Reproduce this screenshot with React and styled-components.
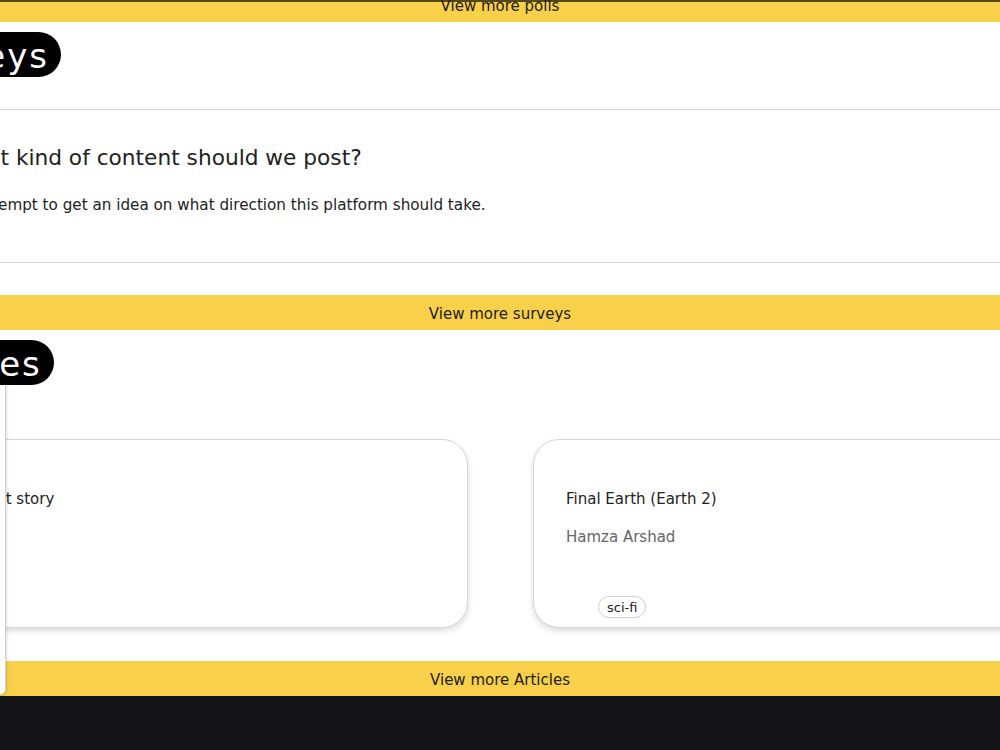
import React from "react";
import styled, { createGlobalStyle } from "styled-components";

const GlobalStyle = createGlobalStyle`
  html, body {
    margin: 0;
    padding: 0;
    background: #131418;
    overflow: hidden;
  }
  body {
    font-family: "DejaVu Sans", Verdana, sans-serif;
    color: #222;
  }
`;

const Page = styled.div`
  width: 1000px;
  height: 750px;
  overflow: hidden;
  background: #131418;
  position: relative;
`;

const Main = styled.main`
  background: #fff;
  margin-top: -13px;
  display: flex;
  flex-direction: column;
`;

const TopShade = styled.div`
  position: absolute;
  top: 0;
  left: 0;
  right: 0;
  height: 2px;
  background: rgba(40, 32, 8, 0.78);
  z-index: 3;
`;

const MoreBar = styled.a`
  display: block;
  height: 35px;
  line-height: 38px;
  background: #f9d049;
  color: #222;
  font-size: 15px;
  text-align: center;
  text-decoration: none;
  margin-top: ${(p) => p.$gap || 0}px;
`;

const Section = styled.section`
  display: flex;
  flex-direction: column;
  padding-top: 10px;
`;

const Content = styled.div`
  margin-left: -48px;
  display: flex;
  flex-direction: column;
`;

const Pill = styled.h2`
  align-self: flex-start;
  margin: 0 0 0 -65px;
  height: 45px;
  box-sizing: border-box;
  line-height: 45px;
  padding: 2px 12px 0 12px;
  background: #000;
  color: #fff;
  font-size: 34px;
  font-weight: normal;
  letter-spacing: 2px;
  border-radius: 23px;
  position: relative;
  z-index: 2;
`;

const Rule = styled.hr`
  border: 0;
  border-top: 1px solid #d2d2d2;
  margin: ${(p) => p.$top || 0}px 0 0 -50px;
  width: 1100px;
`;

const SurveyItem = styled.article`
  padding: 35px 0 47px;
  display: flex;
  flex-direction: column;
  gap: 24px;
`;

const SurveyTitle = styled.h3`
  margin: 0;
  font-size: 21.7px;
  line-height: 26px;
  font-weight: normal;
  color: #222;
`;

const SurveyText = styled.p`
  margin: 0;
  font-size: 15.2px;
  line-height: 20px;
  color: #222;
`;

const CardGrid = styled.div`
  display: grid;
  grid-template-columns: 543px 543px;
  gap: 65px;
  margin: 54px 0 0 -27px;
`;

const Card = styled.div`
  height: 189px;
  box-sizing: border-box;
  padding: 49px 33px 9px 32px;
  border: 1px solid #d6d6d6;
  border-radius: 26px;
  background: #fff;
  box-shadow: 0 3px 6px rgba(0, 0, 0, 0.14);
  display: flex;
  flex-direction: column;
`;

const CardTitle = styled.h4`
  margin: 0;
  font-size: 15px;
  line-height: 20px;
  font-weight: normal;
  color: #222;
`;

const Author = styled.p`
  margin: 18px 0 0;
  font-size: 15px;
  line-height: 20px;
  color: #666;
`;

const Tags = styled.ul`
  list-style: none;
  margin: auto 0 0;
  padding: 0 0 0 32px;
  display: flex;
  gap: 6px;
`;

const Tag = styled.li`
  font-size: 13px;
  line-height: 19px;
  padding: 1px 8px 0;
  border: 1px solid #cfcfcf;
  border-radius: 11px;
  color: #222;
`;

const Drawer = styled.aside`
  position: absolute;
  top: 384px;
  left: -300px;
  width: 304px;
  height: 309px;
  background: #fff;
  border: 1px solid #cfcfcf;
  border-radius: 0 0 6px 0;
  box-shadow: 1px 1px 3px rgba(0, 0, 0, 0.12);
  z-index: 1;
`;

const Footer = styled.footer`
  height: 120px;
  background: #131418;
`;

const articles = [
  { title: "A short story", author: "", tags: [] },
  { title: "Final Earth (Earth 2)", author: "Hamza Arshad", tags: ["sci-fi"] },
];

export default function App() {
  return (
    <Page>
      <GlobalStyle />
      <TopShade />
      <Main>
        <MoreBar href="#">View more polls</MoreBar>
        <Section>
          <Content>
            <Pill>Surveys</Pill>
          </Content>
          <Rule $top={32} />
          <Content>
            <SurveyItem>
              <SurveyTitle>What kind of content should we post?</SurveyTitle>
              <SurveyText>
                An attempt to get an idea on what direction this platform should take.
              </SurveyText>
            </SurveyItem>
          </Content>
          <Rule />
        </Section>
        <MoreBar href="#" $gap={32}>View more surveys</MoreBar>
        <Section>
          <Content>
            <Pill>Articles</Pill>
            <CardGrid>
              {articles.map((a) => (
                <Card key={a.title}>
                  <CardTitle>{a.title}</CardTitle>
                  {a.author && <Author>{a.author}</Author>}
                  {a.tags.length > 0 && (
                    <Tags>
                      {a.tags.map((t) => (
                        <Tag key={t}>{t}</Tag>
                      ))}
                    </Tags>
                  )}
                </Card>
              ))}
            </CardGrid>
          </Content>
        </Section>
        <MoreBar href="#" $gap={33}>View more Articles</MoreBar>
      </Main>
      <Drawer />
      <Footer />
    </Page>
  );
}
